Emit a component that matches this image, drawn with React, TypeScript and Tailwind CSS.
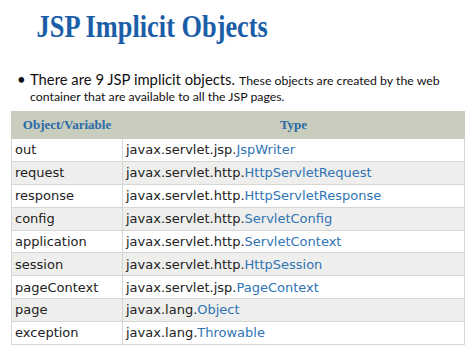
const rows: [string, string, string][] = [
  ["out", "javax.servlet.jsp.", "JspWriter"],
  ["request", "javax.servlet.http.", "HttpServletRequest"],
  ["response", "javax.servlet.http.", "HttpServletResponse"],
  ["config", "javax.servlet.http.", "ServletConfig"],
  ["application", "javax.servlet.http.", "ServletContext"],
  ["session", "javax.servlet.http.", "HttpSession"],
  ["pageContext", "javax.servlet.jsp.", "PageContext"],
  ["page", "javax.lang.", "Object"],
  ["exception", "javax.lang.", "Throwable"],
];

export default function App() {
  return (
    <div className="h-[355px] w-[474px] overflow-hidden bg-white">
      <h1 className="origin-left scale-x-[0.85] pl-[43px] pt-[9px] font-['Liberation_Serif',serif] text-[31px] font-bold leading-[36px] text-[#1b5ea8]">
        JSP Implicit Objects
      </h1>
      <div className="mt-[27px] flex pl-[17px] font-['Lato',sans-serif] text-[#111]">
        <span className="w-[13px] shrink-0 text-[15px] leading-[15px]">•</span>
        <p className="leading-[14px]">
          <span className="text-[14.8px]">There are 9 JSP implicit objects.</span>{" "}
          <span className="text-[12.3px]">
            These objects are created by the web container that are available to all the JSP pages.
          </span>
        </p>
      </div>
      <table className="ml-[11px] mt-[7px] w-[454px] border-collapse font-['DejaVu_Sans',sans-serif] text-[13px] text-[#222]">
        <thead>
          <tr className="h-[27px] bg-[#c9cdbd]">
            <th className="w-[111px] border border-[#c9cdbd] font-['Liberation_Serif',serif] text-[13px] font-bold text-[#2a6aa8]">
              Object/Variable
            </th>
            <th className="border border-[#c9cdbd] border-l-[#e0e2d8] font-['Liberation_Serif',serif] text-[13px] font-bold text-[#2a6aa8]">
              Type
            </th>
          </tr>
        </thead>
        <tbody>
          {rows.map(([name, pkg, cls], i) => (
            <tr key={name} className={i % 2 === 0 ? "h-[22.9px] bg-white" : "h-[22.9px] bg-[#eeeeec]"}>
              <td className="border border-[#d6d6d4] px-[3px] py-0">{name}</td>
              <td className="border border-[#d6d6d4] px-[3px] py-0">
                {pkg}
                <span className="text-[#2f74b5]">{cls}</span>
              </td>
            </tr>
          ))}
        </tbody>
      </table>
    </div>
  );
}
